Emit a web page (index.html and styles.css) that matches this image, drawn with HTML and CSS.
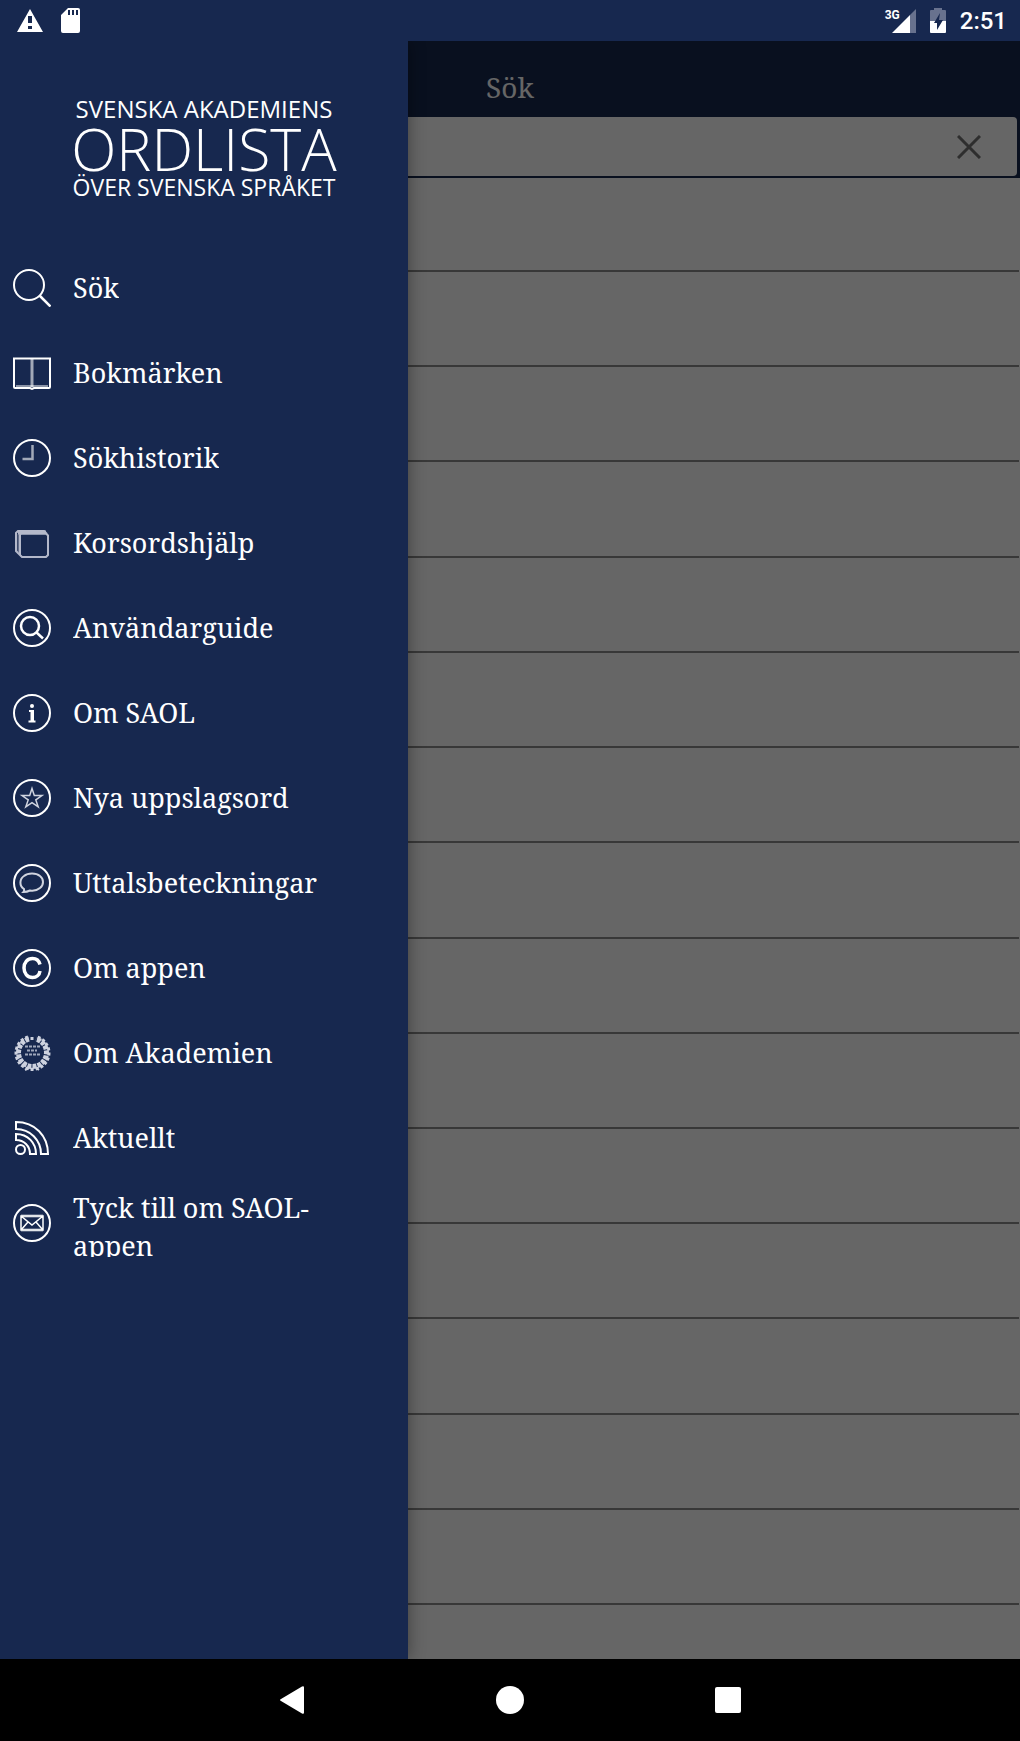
FILE: index.html
```html
<!DOCTYPE html>
<html lang="sv">
<head>
<meta charset="utf-8">
<meta name="viewport" content="width=device-width, initial-scale=1">
<title>SAOL</title>
<link rel="stylesheet" href="styles.css">
</head>
<body>
<header class="status">
  <div class="status-side">
    <svg class="status-icon" viewBox="0 0 26 26" width="26" height="26"><path fill="#fff" fill-rule="evenodd" d="M13 1 26 24H0zM11 8v7h4V8zm0 10v3h4v-3z"/></svg>
    <svg class="status-icon" viewBox="0 0 26 26" width="26" height="26"><path fill="#fff" fill-rule="evenodd" d="M9 0h10a2 2 0 0 1 2 2v21a2 2 0 0 1-2 2H4a2 2 0 0 1-2-2V7zM9 2v5h2V2zm4 0v5h2V2zm4 0v5h2V2z"/></svg>
  </div>
  <div class="status-side status-right">
    <span class="signal"><span class="network">3G</span><svg viewBox="0 0 24 24" width="24" height="24"><path fill="#68728e" d="M18 6 24 0v24h-6z"/><path fill="#fff" d="M0 24 18 6v18z"/></svg></span>
    <svg viewBox="0 0 16 26" width="16" height="26"><path fill="#68728e" d="M0 3q0-1 1-1h3V0h8v2h3q1 0 1 1v11H0z"/><path fill="#fff" d="M0 13h16v11q0 1-1 1H1q-1 0-1-1z"/><path fill="#17284f" d="M10 5 4 15h3v7l6-10H9z"/></svg>
    <time class="clock">2:51</time>
  </div>
</header>
<div class="screen">
  <main class="content">
    <h1 class="title">Sök</h1>
    <form class="search">
      <input class="search-input" type="text" aria-label="Sök">
      <button class="clear" type="button" aria-label="Rensa"><svg viewBox="0 0 24 24" width="24" height="24"><path d="M1 1 23 23M23 1 1 23" stroke="#737373" stroke-width="3"/></svg></button>
    </form>
    <ul class="results">
      <li></li><li></li><li></li><li></li><li></li><li></li><li></li><li></li>
      <li></li><li></li><li></li><li></li><li></li><li></li><li></li><li></li>
    </ul>
  </main>
  <div class="scrim"></div>
  <nav class="drawer">
    <div class="logo">
      <span class="logo-top">SVENSKA AKADEMIENS</span>
      <span class="logo-big">ORDLISTA</span>
      <span class="logo-bottom">ÖVER SVENSKA SPRÅKET</span>
    </div>
    <a class="item" href="#"><svg class="icon" viewBox="0 0 38 38"><circle cx="16" cy="16" r="15"/><path d="m26.500 26.500 11 11" stroke-width="2.500"/></svg><span class="label">Sök</span></a>
    <a class="item" href="#"><svg class="icon" viewBox="0 0 38 38"><path d="M1 4.500h36V33q0 1-1 1H21l-2 1-2-1H2q-1 0-1-1z"/><path d="M3 32h32" opacity=".5"/><path d="M19 5v28" stroke-width="3" opacity=".6"/></svg><span class="label">Bokmärken</span></a>
    <a class="item" href="#"><svg class="icon" viewBox="0 0 38 38"><circle cx="19" cy="19" r="18"/><path d="M19.500 6v14H9.500" stroke-width="2.500" opacity=".6"/></svg><span class="label">Sökhistorik</span></a>
    <a class="item" href="#"><svg class="icon" viewBox="0 0 38 38"><g stroke="#b3b8ca"><path d="M8 9.500h25l2 2v19.500l-2 2H9l-2-2V11zM7 31l-4-4V9l2-2H31l3 3"/><path d="M5 8.500h28" stroke-width="4"/><path d="M5.500 10v18" stroke-width="2" opacity=".5"/></g></svg><span class="label">Korsordshjälp</span></a>
    <a class="item" href="#"><svg class="icon" viewBox="0 0 38 38"><circle cx="19" cy="19" r="18"/><circle cx="17" cy="17" r="9" stroke-width="2.500"/><path d="m23 23 7 6.500" stroke-width="2.500"/></svg><span class="label">Användarguide</span></a>
    <a class="item" href="#"><svg class="icon" viewBox="0 0 38 38"><circle cx="19" cy="19" r="18"/><circle cx="19" cy="12" r="2" fill="#fff" stroke="none"/><path d="M16 17h4v10M15.500 27.500h7" stroke-width="2"/><path d="M19 17v10" stroke-width="3"/></svg><span class="label">Om SAOL</span></a>
    <a class="item" href="#"><svg class="icon" viewBox="0 0 38 38"><circle cx="19" cy="19" r="18"/><path d="m19 9.500 2.300 7h7.700l-6.200 4.400 2.400 7-6.200-4.300-6.200 4.300 2.400-7L9 16.500h7.700z" stroke="#d0d4df" stroke-width="1.500"/></svg><span class="label">Nya uppslagsord</span></a>
    <a class="item" href="#"><svg class="icon" viewBox="0 0 38 38"><circle cx="19" cy="19" r="18"/><path stroke="#d0d4df" d="M11 25c-5-3-4.500-10 0-13 4-3.500 12-3.500 16 0 4 3 4 9 0 12-3 2.500-7 3-10 2.500-2 1-4 1.500-6.500 1.500q1-1 .5-3z"/></svg><span class="label">Uttalsbeteckningar</span></a>
    <a class="item" href="#"><svg class="icon" viewBox="0 0 38 38"><circle cx="19" cy="19" r="18"/><path d="M27 15.500c-1-4-4-6-7.500-6-5 0-8.500 4-8.500 9.500s3.500 9.500 8.500 9.500c4 0 7-2.500 7.500-6.500" stroke-width="3.500"/></svg><span class="label">Om appen</span></a>
    <a class="item" href="#"><svg class="icon" viewBox="0 0 38 38"><g stroke="#cdd2df"><path d="M16 5A14 14 0 1 0 23 5" stroke-width="5" stroke-dasharray="4 1"/><path d="M15 3A16.500 16.500 0 1 0 24 3" stroke-width="3" stroke-dasharray="3 2"/><path d="M19 3v3" stroke-width="3"/><path d="M12 12.500h15M14 16.500h10M12 20.500h15" stroke-width="2" stroke-dasharray="3 1" opacity=".75"/><path d="m12 36 4-2M19 37v-3M26 36l-3-2"/></g></svg><span class="label">Om Akademien</span></a>
    <a class="item" href="#"><svg class="icon" viewBox="0 0 38 38"><circle cx="7.500" cy="30.500" r="4.500"/><path d="M3 3c19 0 32 14 32 32h-7C28 21 17 10 3 10zM3 15c12 0 20 9 20 20h-6c0-8-6-14-14-14z"/></svg><span class="label">Aktuellt</span></a>
    <a class="item" href="#"><svg class="icon" viewBox="0 0 38 38"><circle cx="19" cy="19" r="18"/><path d="M8 12h22v14H8zM8 12l11 9 11-9M8 26l7-8M30 26l-7-8" stroke-width="1.500"/><path d="M8 26h22M8 12h22" stroke-width="3" opacity=".5"/></svg><span class="label">Tyck till om SAOL-appen</span></a>
  </nav>
</div>
<footer class="navbar">
  <button class="nav-button" type="button" aria-label="Tillbaka"><svg viewBox="0 0 28 28" width="28" height="28"><path fill="#fff" d="M3 13 24 .500q2-1 2 1v25q0 2-2 1L3 15q-2-1 0-2z"/></svg></button>
  <button class="nav-button" type="button" aria-label="Hem"><svg viewBox="0 0 28 28" width="28" height="28"><circle cx="14" cy="14" r="14" fill="#fff"/></svg></button>
  <button class="nav-button" type="button" aria-label="Översikt"><svg viewBox="0 0 28 28" width="28" height="28"><rect x="1" y="1" width="26" height="26" rx="2" fill="#fff"/></svg></button>
</footer>
</body>
</html>
```
FILE: styles.css
```css
* { box-sizing: border-box; }

body {
  margin: 0;
  min-height: 100vh;
  display: flex;
  flex-direction: column;
  background: #17284f;
  color: #fff;
  font-family: "Noto Serif", "DejaVu Serif Condensed", "DejaVu Serif", serif;
}

svg { display: block; flex: none; }

button {
  display: grid;
  place-items: center;
  margin: 0;
  padding: 0;
  border: 0;
  background: none;
}

.status {
  display: flex;
  justify-content: space-between;
  align-items: center;
  height: 41px;
  padding: 0 13px 0 17px;
  font-family: Roboto, sans-serif;
}
.status-side { display: flex; align-items: center; gap: 16px; }
.status-right { gap: 14px; }
.signal { display: flex; align-items: center; }
.network {
  align-self: flex-start;
  margin-right: -8px;
  font-size: 12px;
  line-height: 12px;
  font-weight: 700;
}
.clock { font-size: 24px; font-weight: 500; }

.screen {
  position: relative;
  flex: 1;
  display: flex;
}

.content {
  flex: 1;
  display: flex;
  flex-direction: column;
  background: #fff;
}
.title {
  margin: 0;
  height: 76px;
  padding-top: 27px;
  background: #17284f;
  font-size: 28px;
  line-height: 38px;
  font-weight: 400;
  text-align: center;
}
.search {
  display: flex;
  padding: 0 3px 2px;
  background: #17284f;
}
.search-input {
  flex: 1;
  min-width: 0;
  height: 59px;
  border: 0;
  border-radius: 4px 0 0 4px;
  background: #fff;
  font: inherit;
  font-size: 28px;
}
.clear {
  width: 96px;
  border-radius: 0 4px 4px 0;
  background: #fff;
}
.results {
  flex: 1;
  display: grid;
  grid-template-rows: 94px repeat(14, 1fr) 54px;
  margin: 0;
  padding: 0 1px 0 0;
  list-style: none;
}
.results li { border-bottom: 2px solid #8c8c8c; }
.results li:last-child { border-bottom: 0; }

.scrim {
  position: absolute;
  inset: 0;
  background: rgba(0, 0, 0, 0.6);
}

.drawer {
  position: absolute;
  inset: 0 auto 0 0;
  width: 40%;
  background: #17284f;
  box-shadow: 0 0 16px rgba(0, 0, 0, 0.4);
  clip-path: inset(0 -20px 0 0);
}

.logo {
  display: flex;
  flex-direction: column;
  align-items: center;
  height: 204px;
  padding-top: 55px;
  font-family: "Open Sans", sans-serif;
  white-space: nowrap;
}
.logo-top { font-size: 24px; line-height: 26px; }
.logo-big { font-size: 59px; line-height: 52px; font-weight: 300; }
.logo-bottom { font-size: 23px; line-height: 26px; }

.item {
  display: flex;
  align-items: center;
  gap: 22px;
  height: 85px;
  padding: 0 40px 0 13px;
  color: #fff;
  text-decoration: none;
}
.icon {
  width: 38px;
  height: 38px;
  fill: none;
  stroke: #fff;
  stroke-width: 2;
}
.label {
  display: flex;
  align-items: safe center;
  height: 68px;
  overflow: hidden;
  font-size: 27px;
  line-height: 38px;
}

.navbar {
  display: flex;
  justify-content: center;
  gap: 158px;
  height: 82px;
  background: #000;
}
.nav-button { width: 60px; }
```
